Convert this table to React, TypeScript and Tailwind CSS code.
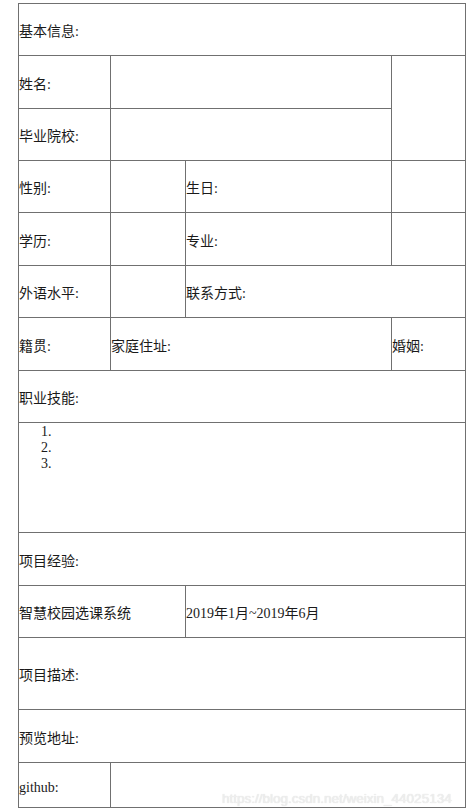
const cell = "bg-white flex items-center pt-[4px] text-[14px] text-[#1a1a1a]";

export default function App() {
  return (
    <div
      className="relative min-h-[812px] w-[474px] bg-white pt-[3px]"
      style={{ fontFamily: '"Liberation Serif", "Noto Sans CJK SC", serif' }}
    >
      <div className="ml-[18px] grid w-[448px] grid-cols-[91px_74px_205px_73px] grid-rows-[51px_52px_51px_51px_52px_51px_52px_51px_109px_52px_51px_71px_52px_44px] gap-px bg-[#707070] p-px">
        <div className={`${cell} col-span-4`}>基本信息:</div>

        <div className={cell}>姓名:</div>
        <div className={`${cell} col-span-2`}></div>
        <div className={`${cell} row-span-2`}></div>

        <div className={cell}>毕业院校:</div>
        <div className={`${cell} col-span-2`}></div>

        <div className={cell}>性别:</div>
        <div className={cell}></div>
        <div className={cell}>生日:</div>
        <div className={cell}></div>

        <div className={cell}>学历:</div>
        <div className={cell}></div>
        <div className={cell}>专业:</div>
        <div className={cell}></div>

        <div className={cell}>外语水平:</div>
        <div className={cell}></div>
        <div className={`${cell} col-span-2`}>联系方式:</div>

        <div className={cell}>籍贯:</div>
        <div className={`${cell} col-span-2`}>家庭住址:</div>
        <div className={cell}>婚姻:</div>

        <div className={`${cell} col-span-4`}>职业技能:</div>

        <div className="col-span-4 bg-white pt-px text-[14px] text-[#1a1a1a]">
          <ol className="list-decimal pl-[36px] leading-4">
            <li></li>
            <li></li>
            <li></li>
          </ol>
        </div>

        <div className={`${cell} col-span-4`}>项目经验:</div>

        <div className={`${cell} col-span-2`}>智慧校园选课系统</div>
        <div className={`${cell} col-span-2`}>2019年1月~2019年6月</div>

        <div className={`${cell} col-span-4`}>项目描述:</div>

        <div className={`${cell} col-span-4`}>预览地址:</div>

        <div className={cell}>github:</div>
        <div className={`${cell} col-span-3`}></div>
      </div>

      {/* csdn watermark */}
      <div
        className="absolute left-[222px] top-[789px] whitespace-nowrap text-[13.5px] text-[#efefef]"
        style={{ fontFamily: '"Liberation Sans", sans-serif', textShadow: "0 0 1px #d6d6d6" }}
      >
        https://blog.csdn.net/weixin_44025134
      </div>
    </div>
  );
}
